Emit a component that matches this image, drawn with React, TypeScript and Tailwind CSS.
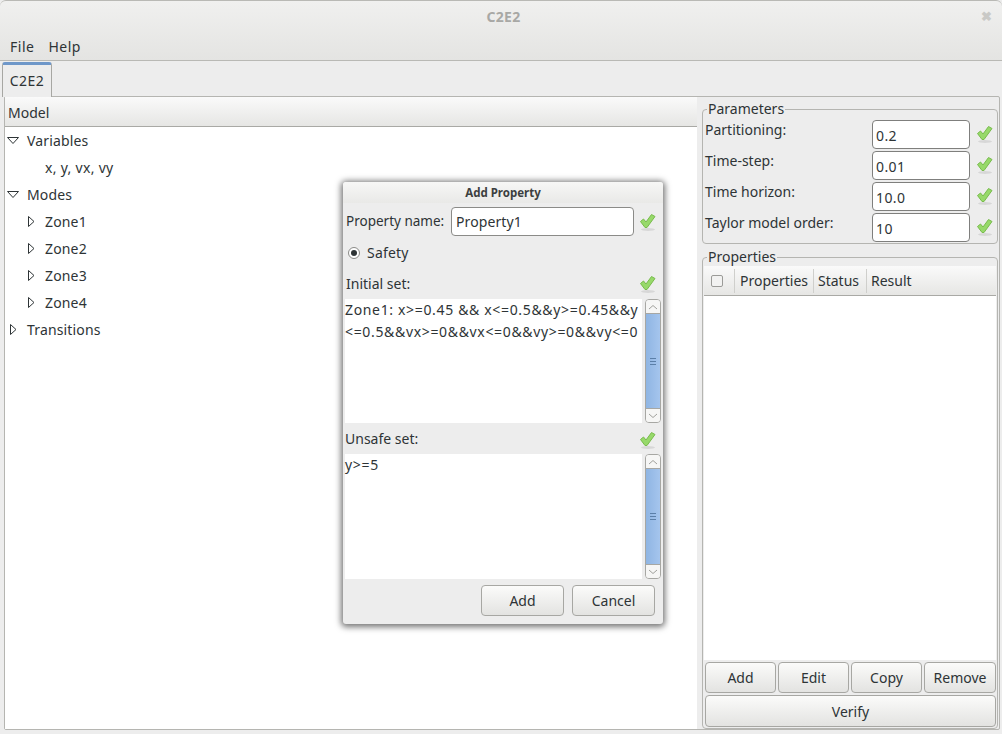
import React from "react";

const font = { fontFamily: '"Noto Sans", sans-serif' };

function Check() {
  return (
    <svg width="18" height="22" viewBox="0 0 18 22" className="shrink-0">
      <ellipse cx="10" cy="19.5" rx="7" ry="1.5" fill="#000" opacity="0.09" />
      <path d="M2.5 11.5 L5.5 9 L8 12 L13.5 4.5 L17 6.5 L9 17.5 L7 17.5 Z" fill="#97d96a" stroke="#78bb4c" strokeWidth="1" strokeLinejoin="round" />
    </svg>
  );
}

function Tri({ open }: { open: boolean }) {
  return (
    <svg width="14" height="14" viewBox="0 0 14 14" className="shrink-0">
      {open ? (
        <path d="M1.5 3.5 H12.5 L7 9.5 Z" fill="#fff" stroke="#2e3436" strokeWidth="1" />
      ) : (
        <path d="M4.5 1.5 V11.5 L10 6.5 Z" fill="#fff" stroke="#2e3436" strokeWidth="1" />
      )}
    </svg>
  );
}

function TreeRow({ label, open, indent }: { label: string; open?: boolean; indent?: boolean }) {
  return (
    <div className={`h-[27px] flex items-center text-[#2e3436] tracking-[0.15px] ${indent ? "pl-[19px]" : "pl-[1px]"}`}>
      <Tri open={!!open} />
      <span className="ml-[7px]">{label}</span>
    </div>
  );
}

function Btn({ label, className = "" }: { label: string; className?: string }) {
  return (
    <button className={`rounded-[4px] border border-[#a7a7a3] bg-gradient-to-b from-[#fbfbfa] to-[#e3e3e1] text-[#2e3436] text-[14px] ${className}`}>
      {label}
    </button>
  );
}

function ParamRow({ label, value }: { label: string; value: string }) {
  return (
    <div className="flex h-[31px] items-start">
      <span className="w-[167px] text-[#2e3436] leading-[20px]">{label}</span>
      <div className="w-[98px] h-[29px] shrink-0 rounded-[4px] border border-[#7f7f7d] bg-white pl-[3px] flex items-center pt-[1px] text-[#2e3436] tracking-[0.4px]">{value}</div>
      <div className="ml-[5px] mt-[2px] h-[22px]"><Check /></div>
    </div>
  );
}

function Scrollbar() {
  return (
    <div className="w-[16px] ml-[3px] flex flex-col rounded-[4px] border border-[#a7a7a3] overflow-hidden bg-[#ededed] shrink-0">
      <div className="h-[14px] flex items-center justify-center bg-[#f6f6f5] border-b border-[#a7a7a3]">
        <svg width="10" height="6" viewBox="0 0 10 6"><path d="M1 5 L5 1.5 L9 5" fill="none" stroke="#a0a09c" strokeWidth="1" /></svg>
      </div>
      <div className="flex-1 bg-gradient-to-r from-[#8fb5e3] to-[#a5c5ed] flex items-center justify-center">
        <div className="w-[6px] h-[7px] flex flex-col justify-between">
          <div className="h-px bg-[#5b7fa8]" /><div className="h-px bg-[#5b7fa8]" /><div className="h-px bg-[#5b7fa8]" />
        </div>
      </div>
      <div className="h-[14px] flex items-center justify-center bg-[#f6f6f5] border-t border-[#a7a7a3]">
        <svg width="10" height="6" viewBox="0 0 10 6"><path d="M1 1 L5 4.5 L9 1" fill="none" stroke="#a0a09c" strokeWidth="1" /></svg>
      </div>
    </div>
  );
}

function Group({ title, className = "", children }: { title: string; className?: string; children: React.ReactNode }) {
  return (
    <div className={`relative rounded-[4px] border border-[#b5b5b1] ${className}`}>
      <span className="absolute left-[4px] -top-[10px] bg-[#ededed] px-[1px] leading-[18px] text-[#2e3436]">{title}</span>
      {children}
    </div>
  );
}

export default function App() {
  return (
    <div style={font} className="relative w-[1002px] h-[734px] overflow-hidden bg-[#ededed] text-[14px] text-[#2e3436] flex flex-col">
      <div className="h-[61px] shrink-0 flex flex-col border-t border-[#b9b9b5] border-b-[#b9b9b5] border-b bg-gradient-to-b from-[#f0f0ef] to-[#e4e4e2] rounded-t-[6px]">
        <div className="h-[31px] flex items-center justify-center relative text-[#a8a8a5] font-bold text-[14px] pl-[5px] tracking-[0.3px]">
          C2E2
          <span className="absolute right-[10px] top-[9px] text-[#c9c9c6] text-[13px] leading-[13px]">✖</span>
        </div>
        <div className="h-[29px] flex items-center pl-[10px] gap-[14px] pt-[1px] tracking-[0.5px]">
          <span>File</span>
          <span>Help</span>
        </div>
      </div>

      <div className="h-[35px] shrink-0 pl-[2px] pt-[1px] flex">
        <div className="w-[50px] h-[35px] rounded-t-[3px] border border-[#a7a7a3] border-t-[3px] border-t-[#6e97c9] border-b-0 flex items-center justify-center z-10 bg-[#ededed] pb-[2px] tracking-[0.5px]">
          C2E2
        </div>
      </div>

      <div className="flex-1 ml-[4px] mr-[2px] mb-[4px] border border-[#b5b5b1] rounded-[2px] flex min-h-0">
        <div className="w-[692px] flex flex-col bg-white">
          <div className="h-[30px] shrink-0 flex items-center pl-[3px] pt-[1px] bg-gradient-to-b from-[#fafafa] to-[#e6e6e4] border-b border-[#a9a9a5]">Model</div>
          <div>
            <TreeRow label="Variables" open />
            <div className="h-[27px] flex items-center pl-[40px] tracking-[0.3px]">x, y, vx, vy</div>
            <TreeRow label="Modes" open />
            <TreeRow label="Zone1" indent />
            <TreeRow label="Zone2" indent />
            <TreeRow label="Zone3" indent />
            <TreeRow label="Zone4" indent />
            <TreeRow label="Transitions" />
          </div>
        </div>

        <div className="flex-1 flex flex-col pl-[5px] pr-[1px] pt-[12px] min-w-0">
          <Group title="Parameters" className="h-[135px] shrink-0 pt-[10px] pl-[2px]">
            <ParamRow label="Partitioning:" value="0.2" />
            <ParamRow label="Time-step:" value="0.01" />
            <ParamRow label="Time horizon:" value="10.0" />
            <ParamRow label="Taylor model order:" value="10" />
          </Group>
          <Group title="Properties" className="flex-1 mt-[13px] flex flex-col pl-[2px] pr-[1px] pt-[8px] pb-[1px] min-h-0">
            <div className="h-[30px] shrink-0 flex items-center bg-gradient-to-b from-[#fafafa] to-[#e6e6e4] border-b border-[#a9a9a5] -ml-px">
              <div className="w-[31px] h-[24px] flex items-center justify-start pl-[7px] border-r border-[#cfcfcc]">
                <div className="w-[12px] h-[12px] rounded-[2px] border border-[#9b9b98] bg-[#f2f2f1]" />
              </div>
              <div className="w-[79px] h-[24px] flex items-center pl-[5px] border-r border-[#cfcfcc]">Properties</div>
              <div className="w-[53px] h-[24px] flex items-center pl-[4px] border-r border-[#cfcfcc]">Status</div>
              <div className="pl-[4px]">Result</div>
            </div>
            <div className="flex-1 bg-white -ml-px" />
            <div className="flex gap-[2px] h-[31px] shrink-0 mt-[2px]">
              <Btn label="Add" className="w-[71px]" />
              <Btn label="Edit" className="w-[71px]" />
              <Btn label="Copy" className="w-[71px]" />
              <Btn label="Remove" className="w-[72px]" />
            </div>
            <Btn label="Verify" className="h-[32px] shrink-0 mt-[2px]" />
          </Group>
        </div>
      </div>

      {/* dialog */}
      <div className="absolute left-[343px] top-[182px] w-[320px] h-[442px] bg-[#ededed] rounded-[3px] shadow-[0_1px_6px_2px_rgba(0,0,0,0.55)] flex flex-col">
        <div className="h-[21px] shrink-0 flex items-center justify-center font-bold text-[11.5px] pt-[1px] bg-gradient-to-b from-[#f7f7f6] to-[#e9e9e7] rounded-t-[3px] text-[#3c3f40]">Add Property</div>
        <div className="h-[36px] shrink-0 flex items-center pl-[3px]">
          <span className="w-[105px] text-[13.5px]">Property name:</span>
          <div className="w-[183px] h-[29px] shrink-0 rounded-[4px] border border-[#8b8b88] bg-white flex items-center pl-[4px] tracking-[0.1px]">Property1</div>
          <div className="ml-[4px]"><Check /></div>
        </div>
        <div className="h-[27px] shrink-0 flex items-center pl-[5px]">
          <div className="w-[12px] h-[12px] rounded-full border border-[#8b8b88] bg-white flex items-center justify-center">
            <div className="w-[6px] h-[6px] rounded-full bg-[#2e3436]" />
          </div>
          <span className="ml-[7px] tracking-[0.2px]">Safety</span>
        </div>
        <div className="h-[33px] shrink-0 flex items-center pl-[3px] justify-between pr-[7px]">
          <span className="pt-[1px]">Initial set:</span>
          <Check />
        </div>
        <div className="h-[124px] shrink-0 flex pl-[2px] pr-[2px]">
          <div className="w-[298px] bg-white leading-[22px] tracking-[0.66px] whitespace-pre">{"Zone1: x>=0.45 && x<=0.5&&y>=0.45&&y\n<=0.5&&vx>=0&&vx<=0&&vy>=0&&vy<=0"}</div>
          <Scrollbar />
        </div>
        <div className="h-[31px] shrink-0 flex items-center pl-[2px] justify-between pr-[7px]">
          <span>Unsafe set:</span>
          <Check />
        </div>
        <div className="h-[125px] shrink-0 flex pl-[2px] pr-[2px]">
          <div className="w-[298px] bg-white leading-[22px] tracking-[0.7px]">{"y>=5"}</div>
          <Scrollbar />
        </div>
        <div className="flex justify-end gap-[8px] pr-[8px] pt-[6px]">
          <Btn label="Add" className="w-[83px] h-[31px]" />
          <Btn label="Cancel" className="w-[83px] h-[31px]" />
        </div>
      </div>
    </div>
  );
}
